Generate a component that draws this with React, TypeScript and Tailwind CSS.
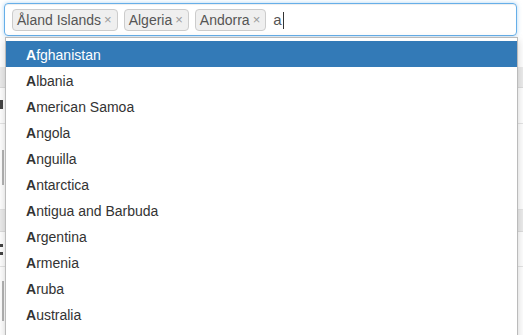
import React from "react";

const tags = ["Åland Islands", "Algeria", "Andorra"];

const results = [
  "Afghanistan",
  "Albania",
  "American Samoa",
  "Angola",
  "Anguilla",
  "Antarctica",
  "Antigua and Barbuda",
  "Argentina",
  "Armenia",
  "Aruba",
  "Australia",
];

function Tag({ label }: { label: string }) {
  return (
    <span className="flex h-[22px] items-center rounded-[4px] border border-[#cccccc] bg-[#efefef] pl-[4px] pr-[5px] text-[14px] text-[#555555]">
      {label}
      <span className="ml-[3px] text-[13px] text-[#999999]">×</span>
    </span>
  );
}

export default function App() {
  return (
    <div
      className="relative h-[335px] w-[523px] overflow-hidden bg-white text-[14px] text-[#333333]"
      style={{ fontFamily: '"Liberation Sans", Arial, sans-serif' }}
    >
      {/* search box */}
      <div className="pl-[4px] pr-[6px] pt-[3px]">
        <div className="flex h-[33px] items-center gap-[6px] rounded-[4px] border border-[#66afe9] pb-px pl-[7px] pr-[7px] pt-[2px] shadow-[inset_0_1px_1px_rgba(0,0,0,0.075),0_0_4px_rgba(102,175,233,0.5)]">
          {tags.map((t) => (
            <Tag key={t} label={t} />
          ))}
          <span className="ml-[1px] flex items-center text-[15px] text-[#555555]">
            a<span className="ml-[1px] h-[17px] w-px bg-[#333333]" />
          </span>
        </div>
      </div>

      {/* page content behind the dropdown */}
      <div className="mt-[31px]">
        <div className="h-[21px] border-b border-[#dddddd] bg-[#ececec]" />
        <div className="h-[36px] border-b border-[#e5e5e5] pl-0 pt-[12px]">
          <div className="h-[9px] w-[3px] bg-[#444444]" />
        </div>
        <div className="h-[26px]" />
        <div className="ml-[2px] h-[35px] w-[4px] border-l-2 border-[#b5b5b5]" />
        <div className="h-[25px] border-b border-[#e5e5e5]" />
        <div className="h-[22px] border-b border-[#dddddd] bg-[#ececec]" />
        <div className="h-[35px] border-b border-[#e5e5e5] pt-[12px]">
          <div className="h-[3px] w-[3px] bg-[#444444]" />
          <div className="mt-[5px] h-[3px] w-[3px] bg-[#444444]" />
        </div>
        <div className="h-[14px]" />
        <div className="ml-[2px] h-[40px] w-[4px] border-l-2 border-[#b5b5b5]" />
      </div>

      {/* dropdown */}
      <div className="absolute left-[5px] top-[37px] h-[320px] w-[513px] border border-[#bbbbbb] bg-white pt-[3px] shadow-[0_3px_8px_rgba(0,0,0,0.18)]">
        {results.map((r, i) => (
          <div
            key={r}
            className={
              "flex h-[26px] items-center pl-[20px] pt-[2px] " +
              (i === 0 ? "bg-[#337ab7] text-white" : "text-[#333333]")
            }
          >
            <b className="font-bold">{r[0]}</b>
            {r.slice(1)}
          </div>
        ))}
      </div>
    </div>
  );
}
